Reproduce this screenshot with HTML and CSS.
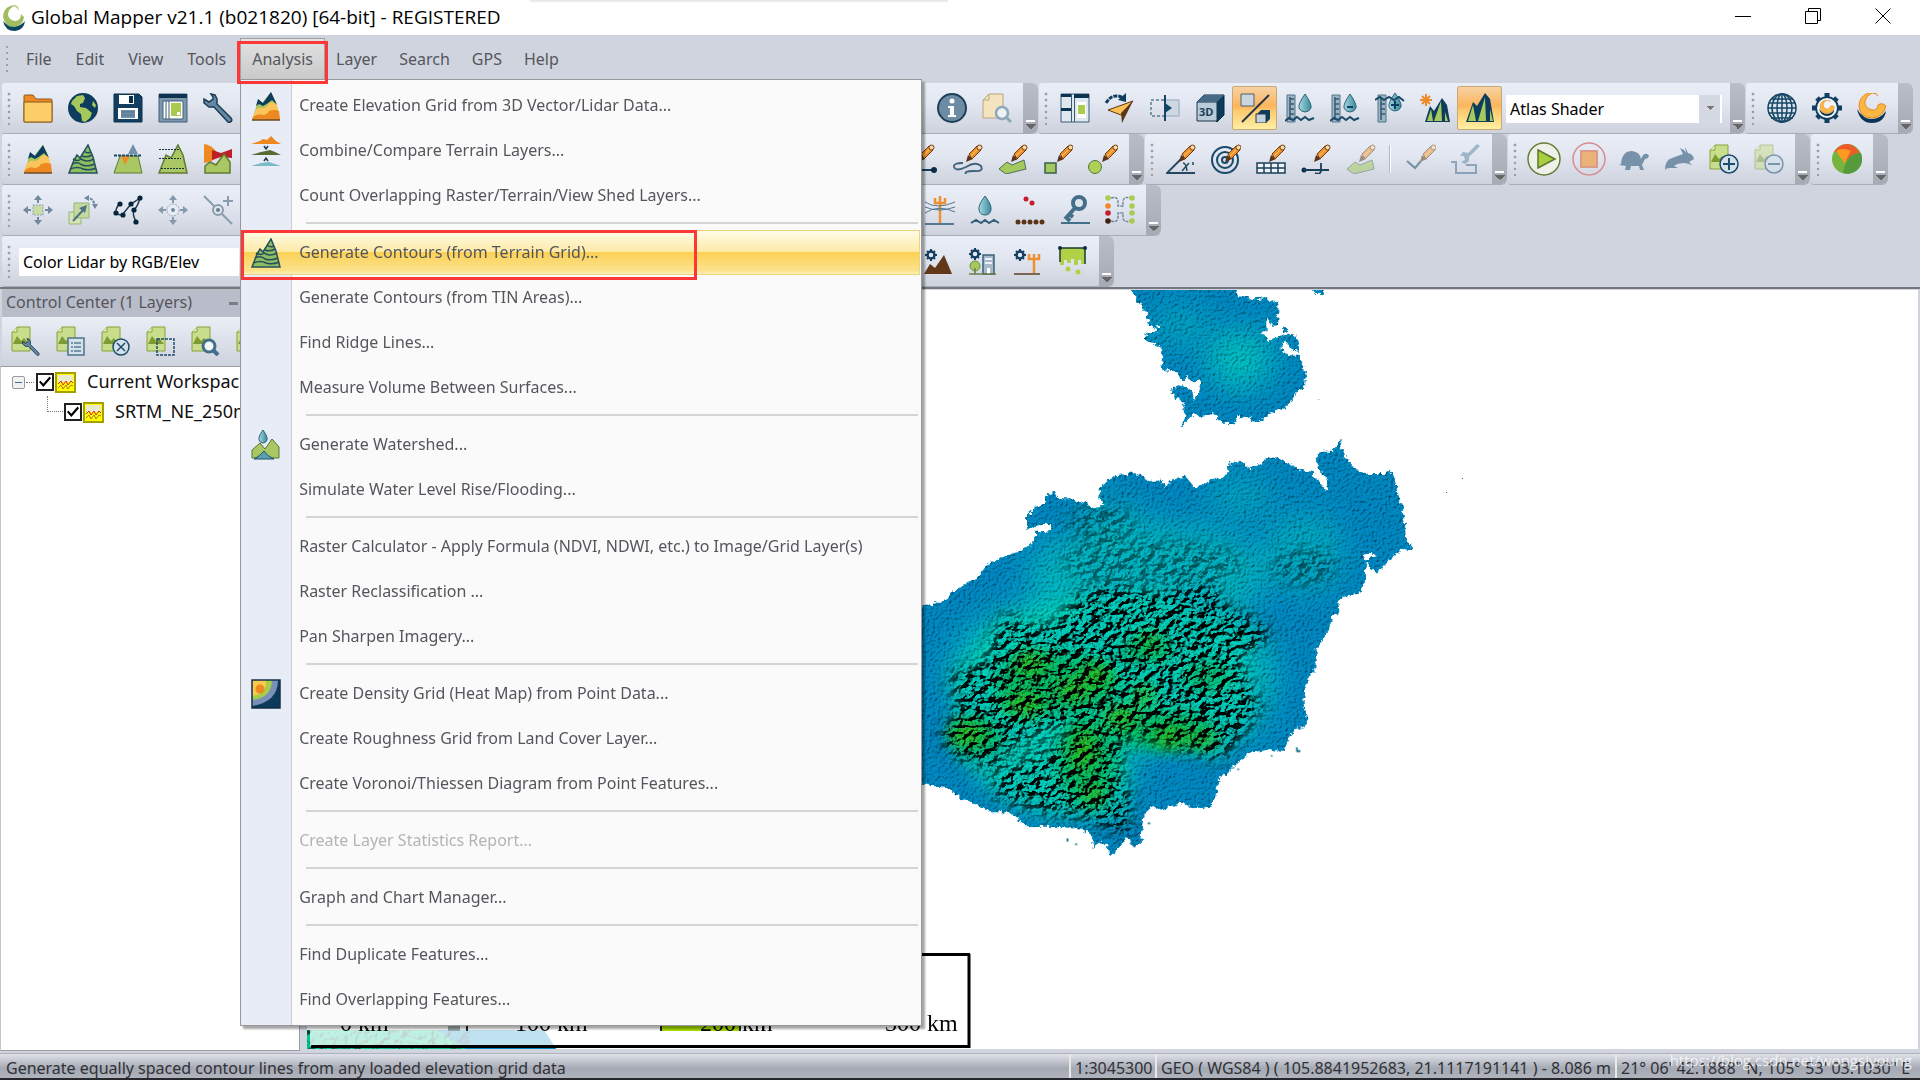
FILE: index.html
```html
<!DOCTYPE html>
<html lang="en">
<head>
<meta charset="utf-8">
<title>Global Mapper v21.1 (b021820) [64-bit] - REGISTERED</title>
<link rel="stylesheet" href="styles.css">
</head>
<body>
<svg class="sprite" aria-hidden="true">
  <defs>
    <linearGradient id="drop" x1="0" x2="1"><stop offset="0" stop-color="#a5d8e0"/><stop offset="1" stop-color="#3a8a9c"/></linearGradient>
  </defs>
  <symbol id="pencil" viewBox="0 0 30 30">
    <path d="M13 18l2-7 5 4z" fill="#5a3418"/><path d="M16 10l8-8 4 4-9 9z" fill="#f0902a" stroke="#6b3d12"/><path d="M18 12l8-8" stroke="#ffc873"/><circle cx="26.500" cy="3.500" r="2.500" fill="#fbd9a0" stroke="#6b3d12"/>
  </symbol>
  <symbol id="doc" viewBox="0 0 30 30">
    <path d="M1 6l5-5h13v24H1z" fill="#c9de8c" stroke="#86a23c"/><path d="M1 6h5V1" fill="#e8f2c4" stroke="#86a23c"/><path d="M2 18l4-8 4 5 3-3 5 6z" fill="#7d9a35"/>
  </symbol>
  <symbol id="gear" viewBox="0 0 12 12">
    <circle cx="6" cy="6" r="3.500" fill="none" stroke="#123f60" stroke-width="2.500"/><path d="M6 0v2M6 10v2M0 6h2M10 6h2M2 2l1 1M9 9l1 1M10 2l-1 1M2 10l1-1" stroke="#123f60" stroke-width="2"/>
  </symbol>
  <symbol id="i-folder" viewBox="0 0 30 30">
    <path d="M1 29V3q0-1 1-1h8l3 4h15q1 0 1 1v22z" fill="#ee8a24" stroke="#8a5a1c"/><path d="M1 9h28v19q0 1-1 1H2q-1 0-1-1z" fill="#fbce68" stroke="#8a5a1c"/>
  </symbol>
  <symbol id="i-globe" viewBox="0 0 30 30">
    <circle cx="15" cy="15" r="15" fill="#0d3c5e"/><path d="M4 8l5-5 6-1 2 3-2 5-3 1 0 3 6 1 6 5-2 5-5 4-3-1-1-7-4-3-3-5-3-2z" fill="#a5c85c"/><path d="M25 8l3 4-1 3-3-3z" fill="#a5c85c"/>
  </symbol>
  <symbol id="i-save" viewBox="0 0 30 30">
    <path d="M1 1h25l3 3v25H1z" fill="#123f60" stroke="#0a2f4a"/><path d="M6 2h15v9H6z" fill="#fff"/><path d="M16 3h4v7h-4z" fill="#0a2f4a"/><path d="M5 15h20v11H5z" fill="#fff"/><path d="M8 17h14v8H8z" fill="#6f8ea6"/><path d="M8 19h14M8 22h14" stroke="#55758f"/>
  </symbol>
  <symbol id="i-window" viewBox="0 0 30 30">
    <path d="M1 1h28v28H1z" fill="#7d98ad" stroke="#3f6078"/><path d="M1 1h28v4H1z" fill="#0d3350"/><path d="M5 8h20v18H5z" fill="#fff" stroke="#3f6078"/><path d="M8 8v18M11 8v18" stroke="#3f6078"/><path d="M13 10h10v13H13z" fill="#a9c94f"/><path d="M19 19h3v3h-3z" fill="#fff"/>
  </symbol>
  <symbol id="i-wrench" viewBox="0 0 30 30">
    <path d="M8 1l4 1 2 4 0 5 14 14q2 3-1 4-2 1-3-1L11 14H6L1 10V6l5 3 4-3V4z" fill="#6488a4" stroke="#1d3d54" stroke-width="1.500"/>
  </symbol>
  <symbol id="i-terrain" viewBox="0 0 30 30">
    <path d="M1 29L7 10l4 2 9-11 5 10 4 18z" fill="#a3c35a"/><path d="M5 15l2-7 5 4 8-11 6 13-5-5-4 3-5 3-4-2z" fill="#0d3c5e"/><path d="M4 20q3-5 7-3 5 0 7-5 5-2 8 2l3 15H1z" fill="#fbc55c"/><path d="M2 26q5-4 9-2 5 0 7-4 6-2 10 0l1 9H1z" fill="#ee8820"/><path d="M1 29h28" stroke="#6a4c28" stroke-width="1.500"/>
  </symbol>
  <symbol id="i-contour" viewBox="0 0 30 30">
    <path d="M1 29l5-13 3-5 3 3 8-13 5 12 4 16z" fill="#8fbd62" stroke="#24505c" stroke-width="1.500"/><path d="M16 7q3 3 7 1M14 12q5 2 10-1M5 15q5 3 8 0 6 4 13 0M4 20q6-3 10 1 6 2 13-1M2 25q8-3 13 0 7 2 13-1" fill="none" stroke="#24505c" stroke-width="1.600"/>
  </symbol>
  <symbol id="i-cutfill" viewBox="0 0 30 30">
    <path d="M15 10l5-10 5 10z" fill="#7391a8"/><path d="M1 29l6-17 18 0 4 17z" fill="#a9c763" stroke="#617a35"/><path d="M8 12h9l-5 9z" fill="#ef8c28"/><path d="M1 11.500h28" stroke="#174a68" stroke-width="2" stroke-dasharray="3 1"/>
  </symbol>
  <symbol id="i-levels" viewBox="0 0 30 30">
    <path d="M1 29l7-18 5 3 7-13 5 10 4 18z" fill="#a9c763" stroke="#617a35" stroke-width="1.500"/><path d="M1 5.500h20M1 14.500h22M3 24.500h24" stroke="#17313f" stroke-dasharray="2 1"/>
  </symbol>
  <symbol id="i-sight" viewBox="0 0 30 30">
    <path d="M1 0q7 1 12 7v7Q9 18 1 19z" fill="#ee8820"/><path d="M9 6l9 3 11-4v9l-11-1-9 3z" fill="#bf2028"/><path d="M2 29v-7l5-4 6 3 8-11 6 8v11z" fill="#a9c763" stroke="#617a35" stroke-width="1.500"/>
  </symbol>
  <symbol id="i-move" viewBox="0 0 30 30">
    <path d="M10 10h10v10H10z" fill="#c7dba6" stroke="#8fa3b3" stroke-dasharray="2 1"/><path d="M15 1v7M15 22v7M1 15h7M22 15h7" stroke="#71899c" stroke-width="2"/><path d="M11 5h8l-4-5zM11 25h8l-4 5zM5 11v8l-5-4zM25 11v8l5-4z" fill="#71899c"/>
  </symbol>
  <symbol id="i-scale" viewBox="0 0 30 30">
    <path d="M1 17h12v12H1z" fill="#d6e5b4" stroke="#9ab27a"/><path d="M6 8h15v15H6z" fill="#c5daa0" stroke="#9ab27a"/><path d="M5 26L17 13" stroke="#4f7086" stroke-width="2"/><path d="M19 10l-2 8-6-5z" fill="#4f7086"/><path d="M18 3q7-1 9 8" fill="none" stroke="#71899c" stroke-width="2" stroke-dasharray="3 1"/><path d="M21 0v6l-5-3zM24 9h6l-3 5z" fill="#71899c"/>
  </symbol>
  <symbol id="i-nodes" viewBox="0 0 30 30">
    <path d="M7 8Q2 14 3 18q3 3 7 1l8-10q5-3 9-6-2 8-6 12-2 5 2 11" fill="none" stroke="#1b3a50" stroke-width="1.500"/><g fill="#06243b"><circle cx="7" cy="9" r="2.600"/><circle cx="3" cy="18" r="2.600"/><circle cx="10" cy="20" r="2.600"/><circle cx="18" cy="9" r="2.600"/><circle cx="27" cy="3" r="2.600"/><circle cx="21" cy="15" r="2.600"/><circle cx="23" cy="27" r="2.600"/></g>
  </symbol>
  <symbol id="i-spin" viewBox="0 0 30 30">
    <circle cx="15" cy="15" r="6" fill="#e6edf4" stroke="#8fa3b3" stroke-dasharray="2 1"/><circle cx="15" cy="15" r="2" fill="#71899c"/><path d="M15 1v7M15 22v7M1 15h7M22 15h7" stroke="#8599aa" stroke-width="2"/><path d="M11 5h8l-4-5zM11 25h8l-4 5zM5 11v8l-5-4zM25 11v8l5-4z" fill="#8599aa"/>
  </symbol>
  <symbol id="i-addpoint" viewBox="0 0 30 30">
    <path d="M1 1l28 28M20 6h10M25 1v10" stroke="#8a9dad" stroke-width="2"/><circle cx="15" cy="15" r="5" fill="#dfe6ee" stroke="#8a9dad" stroke-width="2"/><circle cx="15" cy="15" r="2" fill="#667f92"/>
  </symbol>
  <symbol id="i-combine" viewBox="0 0 30 30">
    <path d="M0 8l9-3 3-2 4 1 4-4 5 5 5 3z" fill="#ee8820"/><path d="M0 19l10-3 5-1 4-1 5 2 6 3z" fill="#586b35"/><path d="M0 30l10-3 8-1 12 4z" fill="#78bac6"/><path d="M13 10l2 3 2-3M13 25l2-3 2 3" fill="none" stroke="#16394f" stroke-width="1.500"/>
  </symbol>
  <symbol id="i-watershed" viewBox="0 0 30 30">
    <path d="M12 0q-5 7-4 10 1 3 4 3t4-3q1-3-4-10z" fill="url(#drop)" stroke="#2e6478"/><path d="M1 28v-8l8-7 5 6 7-10 7 8v11z" fill="#a9c763" stroke="#597434"/><path d="M3 29q6-3 10-8 3 5 10 8z" fill="#5aa0b2" stroke="#1f536c"/>
  </symbol>
  <symbol id="i-heat" viewBox="0 0 30 30">
    <path d="M1 1h28v28H1z" fill="#0c3a5a"/><path d="M1 1h26q0 22-26 26z" fill="#7a90b8"/><path d="M1 1h20q0 18-20 20z" fill="#a6cc4c"/><path d="M1 1h14q1 14-14 16z" fill="#fbc94c"/><circle cx="9" cy="10" r="4.500" fill="#ee8820"/><path d="M1 1h28v28H1z" fill="none" stroke="#12304a" stroke-width="1.500"/>
  </symbol>
  <symbol id="i-info" viewBox="0 0 30 30">
    <circle cx="15" cy="15" r="14" fill="#6d8ba3" stroke="#1d4059" stroke-width="2"/><circle cx="15" cy="8" r="2.500" fill="#fff"/><path d="M11 13h6v9h2v2h-8v-2h2v-7h-2z" fill="#fff"/>
  </symbol>
  <symbol id="i-find" viewBox="0 0 30 30">
    <path d="M1 7l6-6h14v24H1z" fill="#f4e4c0" stroke="#b6a57e"/><path d="M1 7h6V1" fill="none" stroke="#b6a57e"/><circle cx="20" cy="20" r="6" fill="#eef2f7" stroke="#8ea7ba" stroke-width="2.500"/><path d="M24 24l5 5" stroke="#8ea7ba" stroke-width="3"/>
  </symbol>
  <symbol id="i-layout" viewBox="0 0 30 30">
    <path d="M1 1h28v28H1z" fill="#dfe8ef" stroke="#3b5d76"/><path d="M1 1h11v3H1zM14 1h15v4H14zM1 15h10v3H1z" fill="#0c3350"/><path d="M11.500 1v28M14.500 5v24" stroke="#3b5d76"/><path d="M17 9h9v16h-9z" fill="#fff"/><path d="M18 12h7v9h-7z" fill="#a9cc4f"/>
  </symbol>
  <symbol id="i-north" viewBox="0 0 30 30">
    <path d="M1 10Q8-1 18 5" fill="none" stroke="#103d5e" stroke-width="3" stroke-dasharray="4 1"/><path d="M21 0v9l-8-2z" fill="#103d5e"/><path d="M3 17l25-9-12 14z" fill="#fbbf55" stroke="#5b3718"/><path d="M28 8L17 30l-1-10z" fill="#5b3718"/>
  </symbol>
  <symbol id="i-swipe" viewBox="0 0 30 30">
    <path d="M14 7H1v16h13" fill="none" stroke="#5b7c93" stroke-width="1.500" stroke-dasharray="3 2"/><path d="M15 7h14v16H15z" fill="#cdd8e2" stroke="#8fa7b8"/><path d="M15 2v26" stroke="#134565" stroke-width="2"/><path d="M15 10l7 5-7 5z" fill="#134565"/>
  </symbol>
  <symbol id="i-cube" viewBox="0 0 30 30">
    <path d="M2 9l7-7h20v20l-7 7z" fill="#0c3a5a" stroke="#082b45"/><path d="M2 9h20v19H2z" fill="#b9cad8" stroke="#17344a"/><path d="M2 9l7-7h20l-7 7z" fill="#466a86"/><text x="4" y="23" class="cube-label">3D</text>
  </symbol>
  <symbol id="i-toggle3d" viewBox="0 0 30 30">
    <path d="M1 1h13v12H1z" fill="#cbd5de" stroke="#48616f"/><path d="M2 29L29 2" stroke="#24384a" stroke-width="2"/><path d="M17 21l4-4h9v9l-4 4z" fill="#0e3c5c"/><path d="M16 21h10v9H16z" fill="#c3d1dc" stroke="#24384a"/>
  </symbol>
  <symbol id="i-water" viewBox="0 0 30 30">
    <path d="M2 2h8v27H2z" fill="#9db6c6" stroke="#537489"/><path d="M5 4v23M5 6h4M5 11h4M5 16h4M5 21h4" stroke="#335a72" stroke-width="1.500"/><path d="M20 1q-7 10-6 14 2 4 6 4t6-4q1-4-6-14z" fill="url(#drop)" stroke="#2e6478"/><path d="M0 28l4-3 4 2 4-3 4 3 4-3 4 3 5-2" fill="none" stroke="#194b69" stroke-width="2"/>
  </symbol>
  <symbol id="i-raise" viewBox="0 0 30 30">
    <path d="M3 2h8v27H3z" fill="#9db6c6" stroke="#537489"/><path d="M6 4v23M6 11h4M6 16h4M6 21h4" stroke="#335a72" stroke-width="1.500"/><path d="M20 0q-7 10-6 14 2 4 6 4t6-4q1-4-6-14z" fill="url(#drop)" stroke="#2e6478"/><path d="M0 7l5-3 4 3 5-3 5 3 5-3 5 4" fill="none" stroke="#194b69" stroke-width="2"/><path d="M16 12h8M20 8v8" stroke="#123f60" stroke-width="2"/>
  </symbol>
  <symbol id="i-shader-off" viewBox="0 0 30 30">
    <path d="M5 29l5-16 4 5 8-13 5 7 3 17z" fill="#0d3c5e"/><path d="M7 28l4-12 2 12zM14 28l7-20 1 20zM25 28v-9l3 9z" fill="#a5c95c"/><path d="M6 1v12M0 7h12M2 3l8 8M10 3l-8 8" stroke="#ee8a2a" stroke-width="2"/>
  </symbol>
  <symbol id="i-shader" viewBox="0 0 30 30">
    <path d="M1 29l7-20 4 4 8-13 5 6 4 23z" fill="#0d3c5e"/><path d="M3 28L8 12l3 16zM13 28l7-24 1 24zM25 28V16l3 12z" fill="#a5c95c"/>
  </symbol>
  <symbol id="i-web" viewBox="0 0 30 30">
    <g fill="none" stroke="#174666" stroke-width="1.500"><circle cx="15" cy="15" r="14" fill="#dbe5ed"/><ellipse cx="15" cy="15" rx="5" ry="14"/><ellipse cx="15" cy="15" rx="10" ry="14"/><path d="M15 1v28M1 15h28M2 10h26M4 6h22M2 20h26M4 25h22"/></g>
  </symbol>
  <symbol id="i-swirl" viewBox="0 0 30 30">
    <path d="M0 16q3 14 15 14t14-12q-6 8-14 8-9 0-15-10z" fill="#0b3553"/><path d="M11 0Q2 4 2 13q1 12 14 12 10-1 13-12-4-4-8-1-1 6-6 5-8-2-7-9 1-5 7-8 4-1 6 3-4-5-10-3z" fill="#fbb644" stroke="#e58a20"/>
  </symbol>
  <symbol id="i-gearswirl" viewBox="0 0 30 30">
    <use href="#gear" width="30" height="30"/><circle cx="15" cy="15" r="10" fill="#f2f4f8"/><use href="#i-swirl" x="7" y="7" width="16" height="16"/>
  </symbol>
  <symbol id="i-polyline" viewBox="0 0 30 30"><path d="M1 26h24M12 26" stroke="#16405c" stroke-width="2"/><circle cx="26" cy="26" r="3" fill="#0b2f4a"/><use href="#pencil" width="30" height="30" x="-3"/></symbol>
  <symbol id="i-freehand" viewBox="0 0 30 30"><path d="M10 19q-10 0-9 4 2 5 12 0 10-6 15-1 3 6-7 5-12 0-7 4" fill="none" stroke="#3f627b" stroke-width="1.800"/><use href="#pencil" width="30" height="30"/></symbol>
  <symbol id="i-area" viewBox="0 0 30 30"><path d="M1 25l8-7 5 3 12-5 2 9-20 5z" fill="#a5c95c" stroke="#4b6f62"/><use href="#pencil" width="30" height="30"/></symbol>
  <symbol id="i-rect" viewBox="0 0 30 30"><path d="M2 19h11v10H2z" fill="#a5c95c" stroke="#35604d" stroke-width="1.500"/><use href="#pencil" width="30" height="30" x="1"/></symbol>
  <symbol id="i-circle" viewBox="0 0 30 30"><circle cx="7" cy="23" r="6.500" fill="#afd055" stroke="#507540"/><use href="#pencil" width="30" height="30" x="1"/></symbol>
  <symbol id="i-angle" viewBox="0 0 30 30"><path d="M16 14L1 29h28" fill="none" stroke="#24485f" stroke-width="1.800"/><path d="M17 19q3 0 4 8M23 19l-7 8M27 18v3" fill="none" stroke="#24485f" stroke-width="1.500"/><use href="#pencil" width="30" height="30"/></symbol>
  <symbol id="i-rings" viewBox="0 0 30 30"><g fill="none" stroke="#1a4a69" stroke-width="2"><circle cx="14" cy="16" r="13"/><circle cx="14" cy="16" r="8"/><circle cx="14" cy="16" r="3"/></g><use href="#pencil" width="30" height="30" x="1"/></symbol>
  <symbol id="i-grid" viewBox="0 0 30 30"><path d="M1 19h28v10H1zM1 24h28M8 19v10M15 19v10M22 19v10" fill="#eef2f7" stroke="#193f59" stroke-width="1.500"/><use href="#pencil" width="30" height="30"/></symbol>
  <symbol id="i-cogo" viewBox="0 0 30 30"><circle cx="3" cy="26" r="2.500" fill="#0b2f4a"/><path d="M3 26h25M20 19v8q-1 4-6 2" fill="none" stroke="#193f59" stroke-width="1.800"/><use href="#pencil" width="30" height="30"/></symbol>
  <symbol id="i-vertex" viewBox="0 0 30 30"><path d="M1 17l8 7 6-7" fill="none" stroke="#16405c" stroke-width="2"/><use href="#pencil" width="30" height="30" x="1"/></symbol>
  <symbol id="i-editwrench" viewBox="0 0 30 30"><path d="M0 18h5v11h20v-8H15" fill="none" stroke="#446a88" stroke-width="2"/><path d="M29 2L18 13v4l-4 3-4-2 4-2-1-4h-4l3-4 5 1L26 0z" fill="#5d84a4"/></symbol>
  <symbol id="i-play" viewBox="0 0 34 34"><circle cx="17" cy="17" r="16" fill="#eef1e8" stroke="#667d38" stroke-width="1.500"/><path d="M11 8l17 9-17 9z" fill="#a9cf3f" stroke="#5c7530" stroke-width="1.500"/></symbol>
  <symbol id="i-stop" viewBox="0 0 34 34"><circle cx="17" cy="17" r="16" fill="none" stroke="#d98b95" stroke-width="1.500"/><path d="M9 9h16v16H9z" fill="#e8b279" stroke="#dd9a84" stroke-width="2"/></symbol>
  <symbol id="i-turtle" viewBox="0 0 30 30"><path d="M2 20Q3 7 13 7q8 1 9 8l2-4q4-3 6 1-1 3-4 3l-3 6 2 5h-4l-1-4h-8l-1 4H6l1-4-7-1z" fill="#7792a8"/></symbol>
  <symbol id="i-rabbit" viewBox="0 0 30 30"><path d="M1 26q0-10 7-12l11-4-3-6 4 2 2 3-1-6 3 6q5 1 6 6l-5 3 3 3-7-2q-8 0-11 3l4 2h-8q-4 0-5 2z" fill="#7792a8"/></symbol>
  <symbol id="i-docplus" viewBox="0 0 30 30"><use href="#doc" width="30" height="30"/><circle cx="20" cy="20" r="9" fill="#d3e0e9" stroke="#1d4d6d" stroke-width="1.500"/><path d="M20 14v12M14 20h12" stroke="#1d4d6d" stroke-width="2"/></symbol>
  <symbol id="i-docminus" viewBox="0 0 30 30"><use href="#doc" width="30" height="30"/><circle cx="20" cy="20" r="9" fill="#d3e0e9" stroke="#1d4d6d" stroke-width="1.500"/><path d="M14 20h12" stroke="#1d4d6d" stroke-width="2"/></symbol>
  <symbol id="i-tulip" viewBox="0 0 30 30"><circle cx="15" cy="15" r="15" fill="#76b440"/><path d="M2 8Q8 0 15 0t13 9q-9 0-13 8Q10 7 2 8z" fill="#ee5a2a"/><path d="M4 7q6-4 15 0-3 4-6 13z" fill="#fb9a20"/><path d="M29 9q-15 0-18 20 12 3 18-8 2-6 0-12z" fill="#559a3c"/></symbol>
  <symbol id="i-powerline" viewBox="0 0 30 30"><path d="M15 1v27M10 3v5h10V3" fill="none" stroke="#ef9030" stroke-width="2.500"/><path d="M0 7q12 8 30 0M0 12q14 6 30 0M0 18q13-9 30-1" fill="none" stroke="#53788f"/><path d="M0 29h29" stroke="#53788f" stroke-width="2"/></symbol>
  <symbol id="i-river" viewBox="0 0 30 30"><path d="M15 1Q8 10 9 15q1 5 6 5t6-5q1-5-6-14z" fill="url(#drop)" stroke="#34677b"/><path d="M1 28l5-3 5 3 4-3 4 3 5-3 5 3" fill="none" stroke="#34607b" stroke-width="2"/></symbol>
  <symbol id="i-noise" viewBox="0 0 30 30"><g fill="#c41e2c"><circle cx="11" cy="4" r="2.500"/><circle cx="17" cy="8" r="2.500"/></g><g fill="#5b3315"><circle cx="3" cy="27" r="2.500"/><circle cx="9" cy="27" r="2.500"/><circle cx="15" cy="27" r="2.500"/><circle cx="21" cy="27" r="2.500"/><circle cx="27" cy="27" r="2.500"/></g></symbol>
  <symbol id="i-key" viewBox="0 0 30 30"><circle cx="19" cy="8" r="6" fill="#dce5ed" stroke="#436f8b" stroke-width="4"/><path d="M15 13L5 24M9 19l4 3M6 22l4 4" stroke="#436f8b" stroke-width="4"/><path d="M1 28h29" stroke="#436f8b" stroke-width="2"/></symbol>
  <symbol id="i-classify" viewBox="0 0 30 30"><path d="M6 3q6-2 7 3v5h5V6q1-5 7-3M6 26q6 2 7-3v-5h5v5q1 5 7 3" fill="none" stroke="#6d8ba2" stroke-width="1.500" stroke-dasharray="3 1"/><g fill="#a9cc55"><circle cx="3" cy="3" r="2.800"/><circle cx="27" cy="3" r="2.800"/><circle cx="27" cy="11" r="2.800"/><circle cx="27" cy="18" r="2.800"/><circle cx="27" cy="26" r="2.800"/></g><circle cx="3" cy="11" r="2.800" fill="#ee8a28"/><circle cx="3" cy="18" r="2.800" fill="#c41e2c"/><circle cx="3" cy="26" r="2.800" fill="#402010"/></symbol>
  <symbol id="i-ground" viewBox="0 0 30 30"><path d="M1 28l6-10 5 4 9-13 8 19z" fill="#633818"/><use href="#gear" x="2" y="3" width="12" height="12"/></symbol>
  <symbol id="i-building" viewBox="0 0 30 30"><path d="M15 9h11v19H15z" fill="#a6bac9" stroke="#38627c" stroke-width="1.500"/><path d="M17 13h7M17 17h7" stroke="#eef" stroke-width="2"/><path d="M19 22h3v6h-3z" fill="#fff"/><circle cx="7" cy="20" r="5" fill="#a5c95c" stroke="#728d45"/><path d="M1 28h27M7 22v6" stroke="#6b7c4a" stroke-width="1.500"/><use href="#gear" x="1" y="2" width="12" height="12"/></symbol>
  <symbol id="i-pole" viewBox="0 0 30 30"><path d="M21 8v20M16 8v5h10V8" fill="none" stroke="#ef9030" stroke-width="2.500"/><path d="M1 28h26" stroke="#7c6655" stroke-width="2"/><use href="#gear" x="1" y="3" width="12" height="12"/></symbol>
  <symbol id="i-drip" viewBox="0 0 30 30"><path d="M2 2h25v16h-4v-4h-3v5h-4v-6h-3v4H9v-3H6v5H2z" fill="#b1d147"/><path d="M2 16V2h25v16" fill="none" stroke="#1d3b2c" stroke-width="1.500"/><g fill="#b1d147"><circle cx="10" cy="23" r="2.500"/><circle cx="20" cy="26" r="2.500"/></g><g fill="#0b2f4a"><circle cx="2" cy="2" r="2"/><circle cx="27" cy="2" r="2"/></g></symbol>
  <symbol id="i-docwrench" viewBox="0 0 30 30"><use href="#doc" width="30" height="30"/><use href="#i-wrench" x="11" y="12" width="18" height="18"/></symbol>
  <symbol id="i-doclist" viewBox="0 0 30 30"><use href="#doc" width="30" height="30"/><path d="M12 12h16v17H12z" fill="#d5e1ea" stroke="#4d738d" stroke-width="1.500"/><path d="M15 17h2M15 21h2M15 25h2M18 17h7M18 21h7M18 25h7" stroke="#1d4d6d"/></symbol>
  <symbol id="i-docclose" viewBox="0 0 30 30"><use href="#doc" width="30" height="30"/><circle cx="20" cy="21" r="8" fill="#d3e0e9" stroke="#1d4d6d" stroke-width="1.500"/><path d="M16 17l8 8M24 17l-8 8" stroke="#1d4d6d" stroke-width="1.500"/></symbol>
  <symbol id="i-docselect" viewBox="0 0 30 30"><use href="#doc" width="30" height="30"/><path d="M11 13h17v16H11z" fill="none" stroke="#1d4d6d" stroke-width="1.500" stroke-dasharray="3 1"/></symbol>
  <symbol id="i-doczoom" viewBox="0 0 30 30"><use href="#doc" width="30" height="30"/><circle cx="18" cy="20" r="6" fill="#f3f6f9" stroke="#436f8b" stroke-width="3"/><path d="M22 24l5 5" stroke="#436f8b" stroke-width="4"/></symbol>
  <symbol id="i-layer" viewBox="0 0 21 21"><path d="M1 1h19v19H1z" fill="#ff0" stroke="#a5a000" stroke-width="2"/><path d="M3 3h15v7H3z" fill="#e9e9d0"/><path d="M3 12l3-3 2 4 3-4 2 4 3-4 2 2" fill="none" stroke="#e02020"/><path d="M3 16l3-3 2 4 3-4 2 4 3-4 2 1" fill="none" stroke="#b07818"/></symbol>
</svg>

<header class="titlebar">
  <svg class="app-logo" viewBox="0 0 24 26" aria-hidden="true"><path d="M1 16q2 10 12 10 9-1 10-10-5 6-11 5Q5 21 1 16z" fill="#0c4562"/><path d="M8 1Q1 4 1 12q2 10 11 10 9-1 10-10l-3-3q0 7-6 7-6-1-7-6 0-6 6-9 4 1 4 5 2-4-3-6z" fill="#a0bd62"/></svg>
  <h1 class="title">Global Mapper v21.1 (b021820) [64-bit] - REGISTERED</h1>
  <div class="window-buttons">
    <button aria-label="Minimize"><svg viewBox="0 0 16 16"><path d="M0 8.500h16"/></svg></button>
    <button aria-label="Restore"><svg viewBox="0 0 16 16"><path d="M.5 3.500h12v12H.5zM3.500 3.500v-3h12v12h-3"/></svg></button>
    <button aria-label="Close"><svg viewBox="0 0 16 16"><path d="M.5.5l15 15M15.500.5l-15 15"/></svg></button>
  </div>
</header>

<nav class="menubar">
  <span class="grip"></span>
  <button>File</button>
  <button>Edit</button>
  <button>View</button>
  <button>Tools</button>
  <div class="menu-host">
    <button class="open" aria-expanded="true">Analysis</button>
    <div class="menu" role="menu">
      <button class="entry" role="menuitem"><svg><use href="#i-terrain"/></svg><span>Create Elevation Grid from 3D Vector/Lidar Data...</span></button>
      <button class="entry" role="menuitem"><svg><use href="#i-combine"/></svg><span>Combine/Compare Terrain Layers...</span></button>
      <button class="entry" role="menuitem"><span>Count Overlapping Raster/Terrain/View Shed Layers...</span></button>
      <hr>
      <button class="entry selected" role="menuitem"><svg><use href="#i-contour"/></svg><span>Generate Contours (from Terrain Grid)...</span></button>
      <button class="entry" role="menuitem"><span>Generate Contours (from TIN Areas)...</span></button>
      <button class="entry" role="menuitem"><span>Find Ridge Lines...</span></button>
      <button class="entry" role="menuitem"><span>Measure Volume Between Surfaces...</span></button>
      <hr>
      <button class="entry" role="menuitem"><svg><use href="#i-watershed"/></svg><span>Generate Watershed...</span></button>
      <button class="entry" role="menuitem"><span>Simulate Water Level Rise/Flooding...</span></button>
      <hr>
      <button class="entry" role="menuitem"><span>Raster Calculator - Apply Formula (NDVI, NDWI, etc.) to Image/Grid Layer(s)</span></button>
      <button class="entry" role="menuitem"><span>Raster Reclassification ...</span></button>
      <button class="entry" role="menuitem"><span>Pan Sharpen Imagery...</span></button>
      <hr>
      <button class="entry" role="menuitem"><svg><use href="#i-heat"/></svg><span>Create Density Grid (Heat Map) from Point Data...</span></button>
      <button class="entry" role="menuitem"><span>Create Roughness Grid from Land Cover Layer...</span></button>
      <button class="entry" role="menuitem"><span>Create Voronoi/Thiessen Diagram from Point Features...</span></button>
      <hr>
      <button class="entry" role="menuitem" disabled><span>Create Layer Statistics Report...</span></button>
      <hr>
      <button class="entry" role="menuitem"><span>Graph and Chart Manager...</span></button>
      <hr>
      <button class="entry" role="menuitem"><span>Find Duplicate Features...</span></button>
      <button class="entry" role="menuitem"><span>Find Overlapping Features...</span></button>
    </div>
  </div>
  <button>Layer</button>
  <button>Search</button>
  <button>GPS</button>
  <button>Help</button>
</nav>

<section class="dock" aria-label="Toolbars">
  <div class="dock-row">
    <div class="toolbar span-file">
      <span class="grip"></span>
      <button aria-label="Open"><svg><use href="#i-folder"/></svg></button>
      <button aria-label="Online data"><svg><use href="#i-globe"/></svg></button>
      <button aria-label="Save"><svg><use href="#i-save"/></svg></button>
      <button aria-label="Map layout"><svg><use href="#i-window"/></svg></button>
      <button aria-label="Configure"><svg><use href="#i-wrench"/></svg></button>
      <span class="stretch"></span>
      <button aria-label="Feature info"><svg><use href="#i-info"/></svg></button>
      <button aria-label="Search"><svg><use href="#i-find"/></svg></button>
      <span class="more"></span>
    </div>
    <div class="toolbar">
      <span class="grip"></span>
      <button aria-label="Views"><svg><use href="#i-layout"/></svg></button>
      <button aria-label="Fly to"><svg><use href="#i-north"/></svg></button>
      <button aria-label="Swipe"><svg><use href="#i-swipe"/></svg></button>
      <button aria-label="3D view"><svg><use href="#i-cube"/></svg></button>
      <button class="on" aria-label="Link views"><svg><use href="#i-toggle3d"/></svg></button>
      <button aria-label="Water level"><svg><use href="#i-water"/></svg></button>
      <button aria-label="Lower water"><svg><use href="#i-water"/><path d="M17 14h6" stroke="#123f60" stroke-width="2"/></svg></button>
      <button aria-label="Raise water"><svg><use href="#i-raise"/></svg></button>
      <button aria-label="Hill shading"><svg><use href="#i-shader-off"/></svg></button>
      <button class="on" aria-label="Shader"><svg><use href="#i-shader"/></svg></button>
      <select class="shader" aria-label="Shader style"><option>Atlas Shader</option></select>
      <span class="more"></span>
    </div>
    <div class="toolbar">
      <span class="grip"></span>
      <button aria-label="Web"><svg><use href="#i-web"/></svg></button>
      <button aria-label="Extension settings"><svg><use href="#i-gearswirl"/></svg></button>
      <button aria-label="Extension"><svg><use href="#i-swirl"/></svg></button>
      <span class="more"></span>
    </div>
  </div>
  <div class="dock-row">
    <div class="toolbar span-analysis">
      <span class="grip"></span>
      <button aria-label="Elevation grid"><svg><use href="#i-terrain"/></svg></button>
      <button aria-label="Contours"><svg><use href="#i-contour"/></svg></button>
      <button aria-label="Cut and fill"><svg><use href="#i-cutfill"/></svg></button>
      <button aria-label="Levels"><svg><use href="#i-levels"/></svg></button>
      <button aria-label="View shed"><svg><use href="#i-sight"/></svg></button>
      <span class="stretch"></span>
      <button aria-label="Draw line"><svg><use href="#i-polyline"/></svg></button>
      <button aria-label="Draw freehand"><svg><use href="#i-freehand"/></svg></button>
      <button aria-label="Draw area"><svg><use href="#i-area"/></svg></button>
      <button aria-label="Draw rectangle"><svg><use href="#i-rect"/></svg></button>
      <button aria-label="Draw circle"><svg><use href="#i-circle"/></svg></button>
      <span class="more"></span>
    </div>
    <div class="toolbar">
      <span class="grip"></span>
      <button aria-label="Angle"><svg><use href="#i-angle"/></svg></button>
      <button aria-label="Range rings"><svg><use href="#i-rings"/></svg></button>
      <button aria-label="Grid"><svg><use href="#i-grid"/></svg></button>
      <button aria-label="COGO"><svg><use href="#i-cogo"/></svg></button>
      <button aria-label="Buffer" disabled><svg><use href="#i-area"/></svg></button>
      <span class="split"></span>
      <button aria-label="Edit vertex" disabled><svg><use href="#i-vertex"/></svg></button>
      <button aria-label="Edit feature" disabled><svg><use href="#i-editwrench"/></svg></button>
      <span class="more"></span>
    </div>
    <div class="toolbar">
      <span class="grip"></span>
      <button aria-label="Play"><svg class="large"><use href="#i-play"/></svg></button>
      <button aria-label="Stop"><svg class="large"><use href="#i-stop"/></svg></button>
      <button aria-label="Slower"><svg><use href="#i-turtle"/></svg></button>
      <button aria-label="Faster"><svg><use href="#i-rabbit"/></svg></button>
      <button aria-label="Add frame"><svg><use href="#i-docplus"/></svg></button>
      <button aria-label="Remove frame" disabled><svg><use href="#i-docminus"/></svg></button>
      <span class="more"></span>
    </div>
    <div class="toolbar">
      <span class="grip"></span>
      <button aria-label="Vegetation"><svg><use href="#i-tulip"/></svg></button>
      <span class="more"></span>
    </div>
  </div>
  <div class="dock-row">
    <div class="toolbar span-edit">
      <span class="grip"></span>
      <button aria-label="Move"><svg><use href="#i-move"/></svg></button>
      <button aria-label="Scale"><svg><use href="#i-scale"/></svg></button>
      <button aria-label="Vertices"><svg><use href="#i-nodes"/></svg></button>
      <button aria-label="Rotate"><svg><use href="#i-spin"/></svg></button>
      <button aria-label="Insert vertex"><svg><use href="#i-addpoint"/></svg></button>
      <span class="stretch"></span>
      <button aria-label="Powerlines"><svg><use href="#i-powerline"/></svg></button>
      <button aria-label="Water"><svg><use href="#i-river"/></svg></button>
      <button aria-label="Noise"><svg><use href="#i-noise"/></svg></button>
      <button aria-label="Key points"><svg><use href="#i-key"/></svg></button>
      <button aria-label="Reclassify"><svg><use href="#i-classify"/></svg></button>
      <span class="more"></span>
    </div>
  </div>
  <div class="dock-row">
    <div class="toolbar span-lidar">
      <span class="grip"></span>
      <select class="lidar" aria-label="Lidar colors"><option>Color Lidar by RGB/Elev</option></select>
      <span class="stretch"></span>
      <button aria-label="Classify ground"><svg><use href="#i-ground"/></svg></button>
      <button aria-label="Classify buildings"><svg><use href="#i-building"/></svg></button>
      <button aria-label="Classify poles"><svg><use href="#i-pole"/></svg></button>
      <button aria-label="Extract"><svg><use href="#i-drip"/></svg></button>
      <span class="more"></span>
    </div>
  </div>
</section>

<main class="workspace">
  <aside class="panel">
    <div class="panel-head"><h2>Control Center (1 Layers)</h2><span class="collapse"></span></div>
    <div class="panel-tools">
      <button aria-label="Options"><svg><use href="#i-docwrench"/></svg></button>
      <button aria-label="Metadata"><svg><use href="#i-doclist"/></svg></button>
      <button aria-label="Close layer"><svg><use href="#i-docclose"/></svg></button>
      <button aria-label="Select layer"><svg><use href="#i-docselect"/></svg></button>
      <button aria-label="Zoom to layer"><svg><use href="#i-doczoom"/></svg></button>
      <button aria-label="Add layer"><svg><use href="#i-docplus"/></svg></button>
    </div>
    <ul class="tree">
      <li><span class="twist"></span><span class="dots"></span><input type="checkbox" id="ws" checked><svg><use href="#i-layer"/></svg><label for="ws">Current Workspace</label></li>
      <li class="child"><span class="elbow"></span><input type="checkbox" id="srtm" checked><svg><use href="#i-layer"/></svg><label for="srtm">SRTM_NE_250m</label></li>
    </ul>
  </aside>
  <div class="map">
    <svg viewBox="307 290 1611 760" preserveAspectRatio="xMinYMin slice" aria-label="Map">
      <defs>
        <filter id="coast" x="-5%" y="-5%" width="110%" height="110%"><feTurbulence type="fractalNoise" baseFrequency=".07" numOctaves="3" seed="4"/><feDisplacementMap in="SourceGraphic" scale="22" xChannelSelector="R" yChannelSelector="G"/></filter>
        <filter id="soft" x="-50%" y="-50%" width="200%" height="200%"><feGaussianBlur stdDeviation="22"/></filter>
        <filter id="softer" x="-50%" y="-50%" width="200%" height="200%"><feGaussianBlur stdDeviation="45"/></filter>
        <filter id="fine" x="0" y="0" width="100%" height="100%" color-interpolation-filters="sRGB"><feTurbulence type="fractalNoise" baseFrequency=".12" numOctaves="3" seed="8"/><feColorMatrix values="0 0 0 0 0  0 0 0 0 0  0 0 0 0 0  1 0 0 0 0"/><feDiffuseLighting surfaceScale="4" lighting-color="#fff"><feDistantLight azimuth="225" elevation="55"/></feDiffuseLighting><feColorMatrix values="1.150 0 0 0 .05  0 1.150 0 0 .05  0 0 1.150 0 .05  0 0 0 1 0"/></filter>
        <filter id="rough" x="0" y="0" width="100%" height="100%" color-interpolation-filters="sRGB"><feTurbulence type="fractalNoise" baseFrequency=".04 .05" numOctaves="5" seed="21"/><feColorMatrix values="0 0 0 0 0  0 0 0 0 0  0 0 0 0 0  1 0 0 0 0"/><feDiffuseLighting surfaceScale="34" lighting-color="#fff"><feDistantLight azimuth="225" elevation="50"/></feDiffuseLighting><feColorMatrix values="1.800 0 0 0 -.15  0 1.800 0 0 -.15  0 0 1.800 0 -.15  0 0 0 1 0"/></filter>
        <clipPath id="view"><path d="M307 290h1611v760H307z"/></clipPath>
        <g id="land">
          <path d="M620 10L640 45 655 65 668 90 685 105 680 120 695 145 715 140 712 155 695 155 675 165 680 185 705 190 722 210 730 235 722 250 728 270 750 272 775 275 785 300 795 300 800 285 815 305 845 300 838 320 832 345 825 360 820 335 800 322 775 312 770 325 750 330 762 345 775 358 790 372 795 400 785 440 800 425 825 400 840 412 865 402 885 405 905 428 945 430 955 412 985 410 1010 425 1040 412 1060 395 1095 385 1110 370 1125 345 1155 315 1160 285 1150 255 1135 228 1110 225 1085 210 1085 190 1100 186 1110 210 1137 215 1130 170 1115 162 1060 175 1045 185 1035 165 1020 158 1040 150 1038 110 1050 120 1060 140 1075 138 1075 70 1060 65 1040 55 1000 58 955 48 950 10z"/>
          <path d="M1183 10h28v32h-28zM1085 145l12-4 8 14-14 6zM1188 362l10-8v6z"/>
          <path d="M-60 1010L21 975 70 965 105 930 170 895 205 850 240 835 320 803 345 780 345 757 365 752 392 755 388 735 370 735 345 742 320 752 315 715 345 680 375 672 375 645 400 635 415 655 450 655 480 670 500 662 510 682 540 678 550 665 535 655 540 625 560 605 590 585 650 580 670 590 690 605 715 605 720 592 735 622 760 595 800 590 830 626 850 610 870 597 910 595 925 570 930 545 960 545 990 565 1030 550 1035 535 1070 532 1110 555 1150 572 1180 575 1185 595 1200 605 1215 628 1222 615 1210 580 1190 565 1190 525 1210 515 1235 515 1250 500 1260 478 1275 530 1310 570 1345 582 1395 582 1412 575 1425 600 1435 650 1448 685 1455 730 1457 775 1478 808 1445 805 1425 825 1400 850 1370 880 1350 860 1340 840 1370 825 1350 817 1330 825 1345 845 1335 870 1335 905 1310 945 1270 950 1255 965 1258 995 1235 1015 1225 1055 1190 1105 1190 1165 1165 1190 1152 1230 1155 1285 1165 1335 1120 1350 1100 1390 1090 1412 1040 1410 990 1418 950 1450 925 1475 895 1500 885 1550 875 1580 820 1585 790 1568 720 1590 700 1577 675 1600 662 1660 670 1680 650 1700 620 1675 590 1715 570 1725 560 1700 540 1685 515 1705 520 1670 495 1650 430 1642 370 1640 320 1642 300 1625 295 1610 260 1597 205 1597 185 1580 125 1560 95 1527 21 1515-60 1500z"/>
        </g>
        <mask id="landmask" maskUnits="userSpaceOnUse" x="0" y="30" width="1500" height="1730"><use href="#land" fill="#fff" filter="url(#coast)"/></mask>
        <mask id="hills" maskUnits="userSpaceOnUse" x="0" y="0" width="1500" height="1760">
          <g fill="#fff" filter="url(#soft)">
            <path d="M240 1000L380 1040 480 940 560 890 700 930 860 880 930 980 1040 1030 1060 1080 960 1130 1030 1290 960 1380 900 1450 760 1400 620 1370 600 1480 640 1550 630 1680 500 1620 380 1600 220 1560 230 1470 110 1440 50 1370 110 1290 80 1190 200 1130z"/>
          </g>
          <g fill="#777" filter="url(#soft)"><ellipse cx="1150" cy="860" rx="100" ry="60"/><ellipse cx="700" cy="850" rx="280" ry="70"/><ellipse cx="540" cy="730" rx="110" ry="60"/></g>
          <path d="M260 1440L420 1360" stroke="#000" stroke-opacity=".7" stroke-width="60" stroke-linecap="round" filter="url(#soft)"/>
        </mask>
      </defs>
      <g transform="translate(920 280) scale(.33333)">
        <g mask="url(#landmask)">
          <path d="M0 0h1500v1760H0z" fill="#0088c2"/>
          <g fill="#00bfc2" filter="url(#softer)">
            <ellipse cx="520" cy="1180" rx="430" ry="240"/><ellipse cx="680" cy="880" rx="360" ry="150" opacity=".8"/><ellipse cx="420" cy="1480" rx="220" ry="120"/><ellipse cx="1150" cy="820" rx="120" ry="120" opacity=".6"/><ellipse cx="880" cy="1190" rx="180" ry="210"/>
            <ellipse cx="960" cy="240" rx="100" ry="90"/><ellipse cx="570" cy="720" rx="100" ry="60" opacity=".6"/><ellipse cx="960" cy="650" rx="100" ry="60" opacity=".5"/><ellipse cx="780" cy="140" rx="90" ry="60" opacity=".5"/>
          </g>
          <g fill="#00d8b8" filter="url(#soft)"><path d="M240 1010L480 950 700 930 1030 1070 960 1130 1000 1290 900 1440 620 1370 630 1630 380 1600 230 1540 110 1440 90 1190z" opacity=".6"/></g>
          <g fill="#04c070" filter="url(#soft)"><ellipse cx="410" cy="1210" rx="190" ry="90"/><ellipse cx="170" cy="1370" rx="80" ry="55"/><ellipse cx="500" cy="1440" rx="90" ry="130"/><ellipse cx="730" cy="1350" rx="150" ry="60"/><ellipse cx="680" cy="1110" rx="80" ry="40"/><ellipse cx="860" cy="1190" rx="70" ry="40"/></g>
          <g fill="#30c010" filter="url(#soft)"><ellipse cx="330" cy="1150" rx="50" ry="30"/><ellipse cx="310" cy="1275" rx="60" ry="30"/><ellipse cx="530" cy="1185" rx="40" ry="30"/><ellipse cx="460" cy="1230" rx="50" ry="25"/><ellipse cx="670" cy="1245" rx="30" ry="30"/><ellipse cx="600" cy="1310" rx="50" ry="30"/><ellipse cx="140" cy="1360" rx="50" ry="30"/><ellipse cx="750" cy="1370" rx="50" ry="25"/><ellipse cx="490" cy="1410" rx="30" ry="60"/><ellipse cx="520" cy="1545" rx="30" ry="30"/><ellipse cx="690" cy="1080" rx="25" ry="20"/><ellipse cx="850" cy="1380" rx="40" ry="20"/></g>
          <path class="shade" d="M0 0h1500v1760H0z" filter="url(#fine)"/>
          <g class="shade" mask="url(#hills)"><path d="M0 600h1500v1160H0z" filter="url(#rough)"/></g>
        </g>
        <path d="M1128 1402h5v8h8v6h-12zM1052 1426h6v3h-6zM952 1466h5v4h-5zM440 1675h5v10h-5zM466 1690h5v5h-5zM683 1628h8v4h-8zM640 1690h6v12h-6z" fill="#046a80"/>
      </g>
      <path d="M1446 492h1v1h-1zM1462 478h1v1h-1z" fill="#555"/>
      <g clip-path="url(#view)">
        <path d="M307 1030h237l13 20H307z" fill="#0088c2"/><path d="M307 1030h130l30 20H307z" fill="#00c890"/><path class="shade" d="M307 1030h160l3 20H307z" filter="url(#fine)"/>
        <path d="M310 954h659v92H310z" fill="#fff" fill-opacity=".75"/>
        <path d="M309 954.500h661M969 954v94" stroke="#000" stroke-width="3" fill="none"/><path d="M311 1046.500h659" stroke="#000" stroke-width="3"/>
        <path d="M448 1000h12v31h-12z" fill="#9aa"/><path d="M661 1000h78v31h-78z" fill="#a8e000"/><path d="M661 1000v31M740 1000v31M763 1000v31M467 1000v31" stroke="#222" stroke-width="2"/>
        <g class="scale"><text x="340" y="1031">0 km</text><text x="515" y="1031">100 km</text><text x="700" y="1031">200 km</text><text x="885" y="1031">300 km</text></g>
      </g>
    </svg>
  </div>
</main>

<footer class="status">
  <span class="hint">Generate equally spaced contour lines from any loaded elevation grid data</span>
  <span class="scale-cell">1:3045300</span>
  <span class="geo-cell">GEO ( WGS84 ) ( 105.8841952683, 21.1117191141 ) - 8.086 m</span>
  <span class="dms-cell">21° 06' 42.1888" N, 105° 53' 03.1030" E</span>
  <span class="watermark">https://blog.csdn.net/wongsiyoung</span>
</footer>
</body>
</html>
```
FILE: styles.css
```css
* { box-sizing: border-box; }
body {
  margin: 0;
  height: 100vh;
  display: flex;
  flex-direction: column;
  overflow: hidden;
  background: #d0d4de;
  border-bottom: 2px solid #26272c;
  font-family: "Noto Sans", "Open Sans", sans-serif;
  font-size: 16px;
  line-height: 22px;
  color: #55565c;
}
button, select { font: inherit; color: inherit; border: 0; padding: 0; background: none; }
h1, h2 { margin: 0; font-weight: 400; }
.sprite { position: absolute; width: 0; height: 0; }
.cube-label { font: 700 11px "Open Sans", sans-serif; fill: #1b405a; }

.titlebar {
  flex: none;
  height: 35px;
  display: flex;
  align-items: center;
  gap: 5px;
  padding: 0 2px;
  background: linear-gradient(#e2e2e2, #fff) 530px 0 / 418px 3px no-repeat #fff;
}
.app-logo { width: 24px; height: 26px; }
.title { flex: 1; font-family: "Open Sans", sans-serif; font-size: 19px; line-height: 28px; padding-bottom: 2px; color: #000; }
.window-buttons { display: flex; }
.window-buttons button { width: 70px; height: 34px; }
.window-buttons svg { width: 16px; height: 16px; fill: none; stroke: #000; }

.grip {
  flex: none;
  width: 4px;
  height: 34px;
  margin: 0 4px 0 5px;
  background: radial-gradient(circle, #9a9fab 1px, #fff 2px, transparent 2px) 0 0 / 4px 6px;
}

.menubar {
  flex: none;
  height: 48px;
  display: flex;
  align-items: center;
  position: relative;
  z-index: 5;
}
.menubar > button, .menu-host > button { height: 42px; padding: 0 12px; }
.menubar > .menu-host ~ button { padding: 0 11px; }
.menubar > .grip { height: 30px; margin-right: 5px; }
.menu-host { position: relative; margin-left: 2px; }
.menu-host > .open {
  display: block;
  position: relative;
  border: 1px solid #a0a0a0;
  border-bottom: 0;
  padding: 0 11px 1px;
  background: linear-gradient(#e2e2e2, #c9c9c9);
}
.open::after, .selected::after {
  content: "";
  position: absolute;
  border: 3px solid #fb3737;
  pointer-events: none;
}
.open::after { inset: 2px -4px -4px; z-index: 9; }
.menu {
  position: absolute;
  top: 41px;
  left: 0;
  width: 682px;
  padding: 3px 1px;
  border: 1px solid #989898;
  background: linear-gradient(90deg, #e8ecf6 50px, #c9ccd4 50px, #c9ccd4 51px, #fafafa 51px);
  box-shadow: 3px 3px 2px rgb(0 0 0 / 35%);
}
.menu hr { height: 12px; margin: 0 2px 0 64px; border: 0; background: linear-gradient(#d4d4d4, #d4d4d4) 0 4px / 100% 2px no-repeat; }
.entry {
  display: grid;
  grid-template-columns: 49px 1fr;
  align-items: center;
  width: 100%;
  height: 45px;
  text-align: left;
  position: relative;
}
.entry svg { width: 30px; height: 30px; margin-left: 9px; }
.entry span { grid-column: 2; padding: 0 0 2px 8px; white-space: nowrap; }
.entry:disabled { color: #b4b4b4; }
.selected { background: linear-gradient(#fffdea, #fdeaa8 48%, #fbd155 50%, #fde28c 90%, #fff4c8); box-shadow: inset 0 0 0 1px #ecd37c; }
.selected::after { inset: 0 auto -5px -1px; width: 450px; }

.dock { flex: none; border-bottom: 2px solid #77787c; padding-left: 2px; }
.dock-row { height: 50px; display: flex; gap: 1px; margin-bottom: 1px; }
.toolbar {
  display: flex;
  align-items: center;
  border-radius: 3px 6px 6px 3px;
  background: linear-gradient(#eaeef7, #e3e7f1 40%, #ced2dc);
  box-shadow: 0 1px #a9adb8;
}
.span-file { width: 1036px; }
.span-analysis { width: 1142px; }
.span-edit { width: 1159px; }
.span-lidar { width: 1112px; }
.stretch { flex: 1; }
.toolbar button, .panel-tools button {
  flex: none;
  width: 45px;
  height: 44px;
  display: grid;
  place-items: center;
}
.toolbar svg, .panel-tools svg { width: 30px; height: 30px; }
.toolbar svg.large { width: 34px; height: 34px; }
.toolbar button:disabled svg { opacity: 0.5; }
.toolbar .on { border: 1px solid #c8a874; border-radius: 2px; background: linear-gradient(#f6d2a4, #fdb55c 45%, #fdc86c 55%, #fef0a4); }
.split { width: 2px; height: 28px; margin: 0 7px 0 6px; background: linear-gradient(90deg, #b4b8c2 50%, #fff 50%); }
.more {
  align-self: stretch;
  width: 15px;
  margin-left: 4px;
  padding: 37px 0 0 3px;
  border-radius: 0 6px 6px 0;
  background: linear-gradient(#b9bdc8, #a6aab4);
}
.more::before { content: ""; display: block; width: 9px; height: 2px; margin-bottom: 2px; background: #fff; }
.more::after { content: ""; display: block; width: 10px; height: 5px; background: conic-gradient(from 315deg at 50% 100%, #666 90deg, transparent 0); }
select { appearance: none; background: #fff; color: #000; height: 28px; padding: 0 4px; }
.toolbar select { margin: 2px 8px 0 4px; }
.shader {
  width: 216px;
  background:
    conic-gradient(from 315deg at 50% 100%, #777 90deg, transparent 0) 200px 11px / 8px 4px no-repeat,
    linear-gradient(90deg, #fff 193px, #d4d8e2 193px, #d4d8e2 214px, #fff 214px);
}
.toolbar .shader { margin-right: 4px; }
.lidar { width: 220px; }

.workspace { flex: 1; min-height: 0; display: flex; }
.panel { flex: none; width: 300px; display: flex; flex-direction: column; padding-left: 2px; }
.panel-head { display: flex; align-items: center; height: 28px; padding: 0 62px 0 4px; background: #b9bdc9; }
.panel-head h2 { flex: 1; font-size: 16px; line-height: 22px; padding-bottom: 2px; white-space: nowrap; }
.collapse { width: 9px; height: 3px; background: #7b7d84; }
.panel-tools { display: flex; height: 49px; align-items: center; padding: 0 0 2px 1px; background: linear-gradient(#eaeef7, #ced2dc); overflow: hidden; }
.tree { flex: 1; margin: 0 0 2px -2px; padding: 0; list-style: none; background: #fff; border: 1px solid #9b9da3; border-left-color: #c4c6cc; color: #111; font-size: 18px; }
.tree li { display: flex; align-items: center; height: 30px; padding-left: 11px; }
.tree label { white-space: nowrap; padding: 0 0 2px 11px; }
.tree svg { width: 21px; height: 21px; margin-left: 1px; }
.tree .child { padding-left: 46px; }
.twist { width: 13px; height: 13px; border: 1px solid #9a9a9a; border-radius: 2px; background: linear-gradient(#4a5fa8, #4a5fa8) center / 7px 1px no-repeat #f2f2f2; }
.dots { width: 8px; margin: 0 2px 0 1px; border-top: 1px dotted #777; }
.elbow { width: 16px; height: 16px; margin: -16px 1px 0 0; border: dotted #777; border-width: 0 0 1px 1px; }
.tree input { appearance: none; width: 18px; height: 18px; margin: 0; border: 2px solid #222; background: #fff; display: grid; place-items: center; }
.tree input::before { content: ""; width: 12px; height: 12px; background: #000; clip-path: polygon(0 50%, 12% 40%, 36% 65%, 88% 5%, 100% 18%, 36% 92%); }

.map { flex: 1; margin: 1px 2px 4px 7px; background: #fff; overflow: hidden; }
.map svg { display: block; width: 100%; height: 100%; }
.shade { mix-blend-mode: multiply; }
.scale { font: 24px "Liberation Serif", serif; fill: #000; }

.status {
  flex: none;
  display: flex;
  align-items: center;
  height: 25px;
  position: relative;
  border-top: 1px solid #aeb1b9;
  background: linear-gradient(#dfe2e9, #a5a9b3 60%, #b0b4bd);
  color: #303136;
  line-height: 20px;
  white-space: nowrap;
}
.status span { padding: 4px 0 0 4px; }
.status .hint { flex: 1; padding-left: 6px; }
.scale-cell, .geo-cell, .dms-cell { border-left: 2px solid #e8e8e8; }
.scale-cell { width: 86px; }
.geo-cell { width: 460px; }
.dms-cell { width: 305px; }
.status .watermark { position: absolute; top: -4px; right: 8px; padding: 0; font-family: "Open Sans", sans-serif; font-size: 15px; color: rgb(255 255 255 / 75%); }
```
